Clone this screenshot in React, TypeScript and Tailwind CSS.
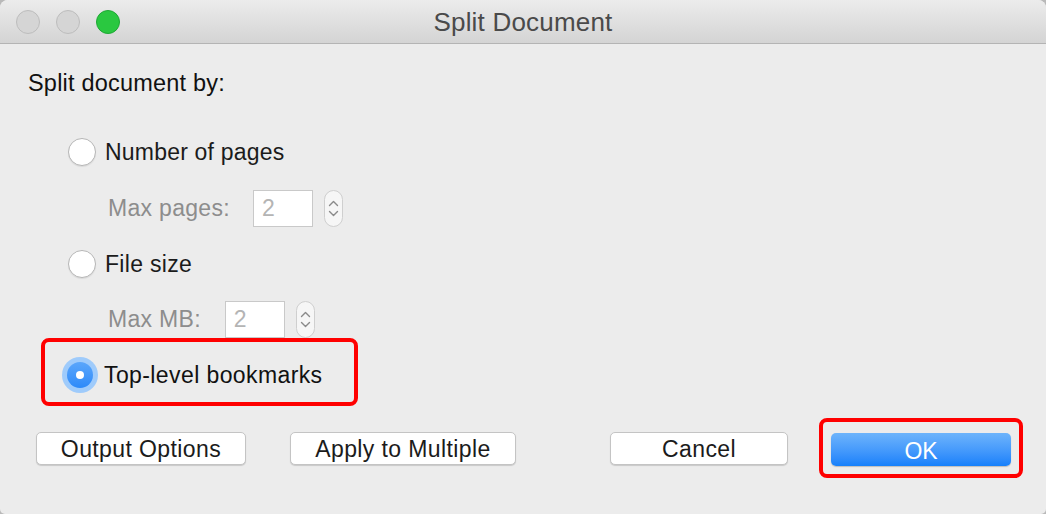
import React from 'react'

const font = { fontFamily: '"Liberation Sans", Arial, sans-serif' }

function Radio({ checked }: { checked?: boolean }) {
  if (checked) {
    return (
      <span className="flex h-[36px] w-[36px] shrink-0 items-center justify-center rounded-full bg-[#9fcbfb]">
        <span className="flex h-[26px] w-[26px] items-center justify-center rounded-full bg-gradient-to-b from-[#5aa6fb] to-[#2d8af9]">
          <span className="h-[8px] w-[8px] rounded-full bg-white" />
        </span>
      </span>
    )
  }
  return (
    <span className="h-[28px] w-[28px] shrink-0 rounded-full border border-[#b6b6b6] bg-white shadow-[0_1px_1px_rgba(0,0,0,0.08)]" />
  )
}

function Stepper() {
  return (
    <span className="flex h-[37px] w-[19px] flex-col items-center justify-center gap-[3px] rounded-full border border-[#cfcfcf] bg-[#f6f6f6]">
      <svg width="11" height="7" viewBox="0 0 11 7" fill="none">
        <path d="M1.5 5.5 L5.5 1.5 L9.5 5.5" stroke="#8a8a8a" strokeWidth="1.4" strokeLinecap="round" strokeLinejoin="round" />
      </svg>
      <svg width="11" height="7" viewBox="0 0 11 7" fill="none">
        <path d="M1.5 1.5 L5.5 5.5 L9.5 1.5" stroke="#8a8a8a" strokeWidth="1.4" strokeLinecap="round" strokeLinejoin="round" />
      </svg>
    </span>
  )
}

function NumberField({ label, inputLeft }: { label: string; inputLeft: string }) {
  return (
    <div className="flex items-center pl-[108px]">
      <span className={`${inputLeft} text-[23px] tracking-[0.3px] text-[#8d8d8d]`}>{label}</span>
      <span className="flex h-[37px] w-[60px] items-center border border-[#c9c9c9] bg-white pl-[8px] text-[23px] text-[#b4b4b4]">
        2
      </span>
      <span className="ml-[11px]">
        <Stepper />
      </span>
    </div>
  )
}

function Button({ children, className = '' }: { children: React.ReactNode; className?: string }) {
  return (
    <button
      className={`flex h-[33px] items-center justify-center rounded-[5px] border border-[#c4c4c4] bg-white pt-[3px] text-[23px] tracking-[0.4px] text-[#1b1b1b] shadow-[0_1px_1px_rgba(0,0,0,0.15)] ${className}`}
    >
      {children}
    </button>
  )
}

export default function App() {
  return (
    <div className="h-[514px] w-[1046px] bg-[#b9b9b9]" style={font}>
      <div className="flex h-full w-full flex-col overflow-hidden rounded-t-[8px] rounded-b-[5px] bg-[#ececec]">
        {/* title bar */}
        <div className="relative flex h-[44px] shrink-0 items-center border-b border-[#b4b4b4] bg-gradient-to-b from-[#ececec] to-[#d4d4d4]">
          <div className="flex items-center gap-[16px] pl-[16px]">
            <span className="h-[24px] w-[24px] rounded-full border border-[#bdbdbd] bg-[#d5d5d5]" />
            <span className="h-[24px] w-[24px] rounded-full border border-[#bdbdbd] bg-[#d5d5d5]" />
            <span className="h-[24px] w-[24px] rounded-full border border-[#1ea834] bg-[#2ac840]" />
          </div>
          <span className="absolute left-0 right-0 top-[6px] text-center text-[26px] leading-[32px] tracking-[0.2px] text-[#4a4a4a]">
            Split Document
          </span>
        </div>

        {/* body */}
        <div className="flex flex-col">
          <div className="mt-[25px] h-[28px] pl-[28px] text-[23.5px] leading-[28px] tracking-[0.2px] text-[#111]">Split document by:</div>

          <div className="mt-[27px] flex h-[56px] items-center gap-[9px] pl-[68px]">
            <Radio />
            <span className="text-[23px] tracking-[0.2px] text-[#1b1b1b]">Number of pages</span>
          </div>

          <div className="flex h-[56px] items-center">
            <NumberField label="Max pages:" inputLeft="mr-[23px]" />
          </div>

          <div className="flex h-[56px] items-center gap-[9px] pl-[68px]">
            <Radio />
            <span className="text-[23px] tracking-[0.3px] text-[#1b1b1b]">File size</span>
          </div>

          <div className="flex h-[46px] items-start pt-[9px]">
            <NumberField label="Max MB:" inputLeft="mr-[24px]" />
          </div>

          <div className="ml-[41px] flex h-[68px] w-[317px] items-center gap-[6px] rounded-[8px] border-[4px] border-[#ff0000] pl-[17px] pt-[6px]">
            <Radio checked />
            <span className="text-[23px] tracking-[0.4px] text-[#111]">Top-level bookmarks</span>
          </div>

          <div className="mt-[11px] flex h-[60px] items-center pl-[36px] pt-[2px]">
            <Button className="w-[210px]">Output Options</Button>
            <Button className="ml-[44px] w-[226px]">Apply to Multiple</Button>
            <Button className="ml-[94px] w-[178px]">Cancel</Button>
            <div className="ml-[31px] flex h-[60px] w-[204px] items-center justify-center rounded-[8px] border-[4px] border-[#ff0000] pt-[3px]">
              <button className="flex h-[33px] w-[180px] items-center justify-center rounded-[5px] bg-gradient-to-b from-[#6db4fb] to-[#1580fb] pt-[3px] text-[23px] text-white shadow-[0_1px_1px_rgba(0,0,0,0.2)]">
                OK
              </button>
            </div>
          </div>
        </div>
      </div>
    </div>
  )
}
